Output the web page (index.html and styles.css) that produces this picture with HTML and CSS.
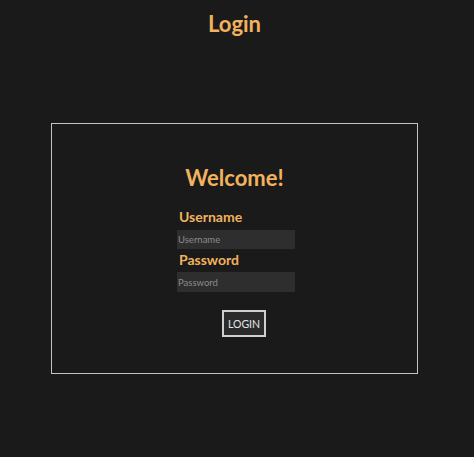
FILE: index.html
```html
<!DOCTYPE html>
<html lang="en">
<head>
<meta charset="UTF-8">
<meta name="viewport" content="width=device-width, initial-scale=1.0">
<title>Login</title>
<link rel="stylesheet" href="styles.css">
</head>
<body>

<div class="page">
  <h1 class="title">Login</h1>

  <div class="login-box">
    <h2 class="welcome">Welcome!</h2>
    <form class="login-form" onsubmit="return false;">
      <label class="field-label" for="username">Username</label>
      <input class="field" type="text" id="username" placeholder="Username">
      <label class="field-label second" for="password">Password</label>
      <input class="field tall" type="password" id="password" placeholder="Password">
      <button class="login-btn" type="submit">LOGIN</button>
    </form>
  </div>
</div>

</body>
</html>
```

FILE: styles.css
```css
  body {
    margin: 0;
    background-color: #1a1a1a;
    font-family: Lato, "Open Sans", sans-serif;
  }
  .page {
    width: 469px;
  }
  .title {
    margin: 0;
    padding-top: 9px;
    height: 114px;
    font-size: 22px;
    line-height: 30px;
    text-align: center;
    color: #f2b25e;
  }
  .login-box {
    margin: 0 auto;
    width: 365px;
    border: 1px solid #c4c4c4;
    padding: 38px 0 36px;
  }
  .welcome {
    margin: 0;
    padding-top: 1px;
    font-size: 22px;
    line-height: 30px;
    text-align: center;
    color: #f2b25e;
  }
  .login-form {
    display: flex;
    flex-direction: column;
    align-items: flex-start;
    width: 118px;
    margin: 13px 0 0 125px;
  }
  .field-label {
    padding: 1px 0 0 2px;
    font-size: 14px;
    font-weight: bold;
    line-height: 19px;
    color: #f2b25e;
    margin-bottom: 4px;
  }
  .field-label.second {
    margin-top: 0;
    margin-bottom: 3px;
  }
  .field {
    box-sizing: border-box;
    width: 118px;
    height: 19px;
    padding: 0 1px;
    border: none;
    outline: none;
    background-color: #2e2e2e;
    color: #ddd;
    font-family: Lato, sans-serif;
    font-size: 9.5px;
  }
  .field.tall {
    height: 20px;
  }
  .field::placeholder {
    color: #8c8c8c;
  }
  .login-btn {
    box-sizing: border-box;
    width: 44px;
    height: 27px;
    margin: 18px 0 0 45px;
    padding: 0;
    border: 2px solid #d0d0d0;
    background-color: #2b2b2b;
    color: #e6e6e6;
    font-family: Lato, sans-serif;
    font-size: 10.5px;
    cursor: pointer;
  }
```
